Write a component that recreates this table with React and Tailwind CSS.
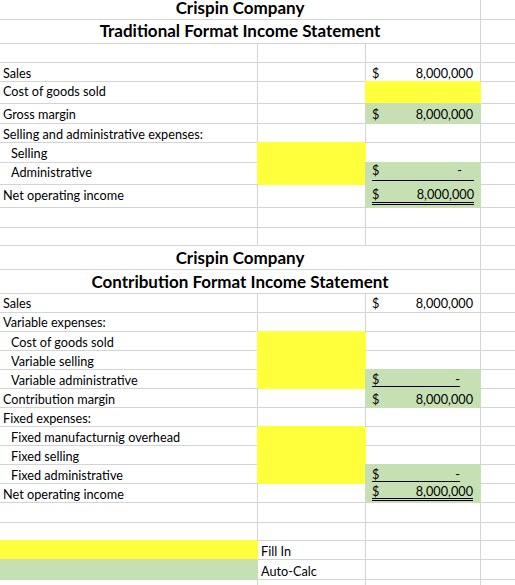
import clsx from "clsx";

const GRID = "border-[#d4d4d4]";
const YELLOW = "bg-[#ffff3c] border-[#ffff3c] shadow-[-1px_-1px_0_0_#ffff3c]";
const GREEN = "bg-[#c6e0b4] border-[#c6e0b4] shadow-[-1px_-1px_0_0_#c6e0b4]";

function Row({ h, children }) {
  return (
    <div className={clsx("flex", h)}>
      {children}
      <div className={clsx("flex-1 border-b", GRID)} />
    </div>
  );
}

function Cell({ w, fill, className, children }) {
  return (
    <div
      className={clsx(
        "flex shrink-0 items-end whitespace-nowrap border-r border-b",
        w,
        fill ? fill : GRID,
        className
      )}
    >
      {children}
    </div>
  );
}

// one line of the sheet: label in A, something in B, money in C
function Line({ h, pb = "pb-0", cPb, label, indent, b, bFill, c, cFill }) {
  return (
    <Row h={h}>
      <Cell w="w-[258px]" className={clsx(pb, indent ? "pl-[11px]" : "pl-[3px]")}>
        {label}
      </Cell>
      <Cell w="w-[108px]" fill={bFill} className={clsx(pb, "pl-[3px]")}>
        {b}
      </Cell>
      <Cell w="w-[115px]" fill={cFill} className={cPb ?? pb}>
        {c}
      </Cell>
    </Row>
  );
}

function Title({ h, pb, leading = "leading-[18px]", children }) {
  return (
    <Row h={h}>
      <div
        className={clsx(
          "flex w-[481px] shrink-0 items-end justify-center border-r border-b text-[17px] font-bold",
          GRID,
          leading,
          pb
        )}
      >
        {children}
      </div>
    </Row>
  );
}

function Money({ value }) {
  return (
    <div className="flex w-full justify-between pl-[6px] pr-[7px]">
      <span>$</span>
      <span className={value === "-" ? "pr-[12px]" : ""}>{value}</span>
    </div>
  );
}

// traditional format: cell bottom border style
function MoneyBorder({ value, double }) {
  return (
    <div
      className={clsx(
        "mx-[6px] flex w-full justify-between border-black",
        double ? "mb-[2px] border-b-[3px] border-double" : "mb-[3px] border-b pb-[2px]"
      )}
    >
      <span>$</span>
      <span className={value === "-" ? "pr-[12px]" : ""}>{value}</span>
    </div>
  );
}

// contribution format: accounting underline right under the text
function MoneyUnder({ value, double }) {
  return (
    <div
      className={clsx(
        "mb-[1px] ml-[6px] flex justify-between border-black leading-[13px]",
        double ? "mr-[7px] w-full border-b-[3px] border-double" : "mr-[20px] w-full border-b"
      )}
    >
      <span>$</span>
      <span>{value}</span>
    </div>
  );
}

export default function App() {
  return (
    <div
      className="h-[585px] w-[515px] overflow-hidden bg-white text-[12.7px] leading-[16px] text-black"
      style={{ fontFamily: "Lato, 'Liberation Sans', sans-serif" }}
    >
      {/* Traditional */}
      <Title h="h-[20px]" pb="pb-[3px]" leading="leading-[16px]">
        Crispin Company
      </Title>
      <Title h="h-[24px]" pb="pb-[3px]">Traditional Format Income Statement</Title>
      <Line h="h-[19px]" />
      <Line h="h-[19px]" label="Sales" c={<Money value="8,000,000" />} />
      <Line h="h-[22px]" pb="pb-[4px]" label="Cost of goods sold" cFill={YELLOW} />
      <Line h="h-[20px]" pb="pb-[1px]" label="Gross margin" cFill={GREEN} c={<Money value="8,000,000" />} />
      <Line h="h-[19px]" label="Selling and administrative expenses:" />
      <Line h="h-[20px]" pb="pb-[1px]" label="Selling" indent bFill={YELLOW} />
      <Line
        h="h-[22px]"
        pb="pb-[4px]"
        cPb="pb-0"
        label="Administrative"
        indent
        bFill={YELLOW}
        cFill={GREEN}
        c={<MoneyBorder value="-" />}
      />
      <Line
        h="h-[23px]"
        pb="pb-[4px]"
        cPb="pb-0"
        label="Net operating income"
        cFill={GREEN}
        c={<MoneyBorder value="8,000,000" double />}
      />
      <Line h="h-[20px]" />
      <Line h="h-[18px]" />

      {/* Contribution */}
      <Title h="h-[24px]" pb="pb-[2px]">Crispin Company</Title>
      <Title h="h-[24px]" pb="pb-[2px]">Contribution Format Income Statement</Title>
      <Line h="h-[19px]" pb="pb-[1px]" label="Sales" c={<Money value="8,000,000" />} />
      <Line h="h-[19px]" pb="pb-[1px]" label="Variable expenses:" />
      <Line h="h-[19px]" label="Cost of goods sold" indent bFill={YELLOW} />
      <Line h="h-[19px]" label="Variable selling" indent bFill={YELLOW} />
      <Line
        h="h-[19px]"
        label="Variable administrative"
        indent
        bFill={YELLOW}
        cFill={GREEN}
        c={<MoneyUnder value="-" />}
      />
      <Line h="h-[19px]" label="Contribution margin" cFill={GREEN} c={<Money value="8,000,000" />} />
      <Line h="h-[19px]" label="Fixed expenses:" />
      <Line h="h-[19px]" label="Fixed manufacturnig overhead" indent bFill={YELLOW} />
      <Line h="h-[19px]" label="Fixed selling" indent bFill={YELLOW} />
      <Line
        h="h-[19px]"
        label="Fixed administrative"
        indent
        bFill={YELLOW}
        cFill={GREEN}
        c={<MoneyUnder value="-" />}
      />
      <Line
        h="h-[19px]"
        label="Net operating income"
        cFill={GREEN}
        c={<MoneyUnder value="8,000,000" double />}
      />
      <Line h="h-[20px]" />
      <Line h="h-[18px]" />

      {/* Legend */}
      <Row h="h-[19px]">
        <Cell w="w-[258px]" fill={YELLOW} />
        <Cell w="w-[108px]" className="pl-[3px]">Fill In</Cell>
        <Cell w="w-[115px]" />
      </Row>
      <Row h="h-[20px]">
        <Cell w="w-[258px]" fill={GREEN} />
        <Cell w="w-[108px]" className="pl-[3px]">Auto-Calc</Cell>
        <Cell w="w-[115px]" />
      </Row>
      <Line h="h-[20px]" />
    </div>
  );
}
